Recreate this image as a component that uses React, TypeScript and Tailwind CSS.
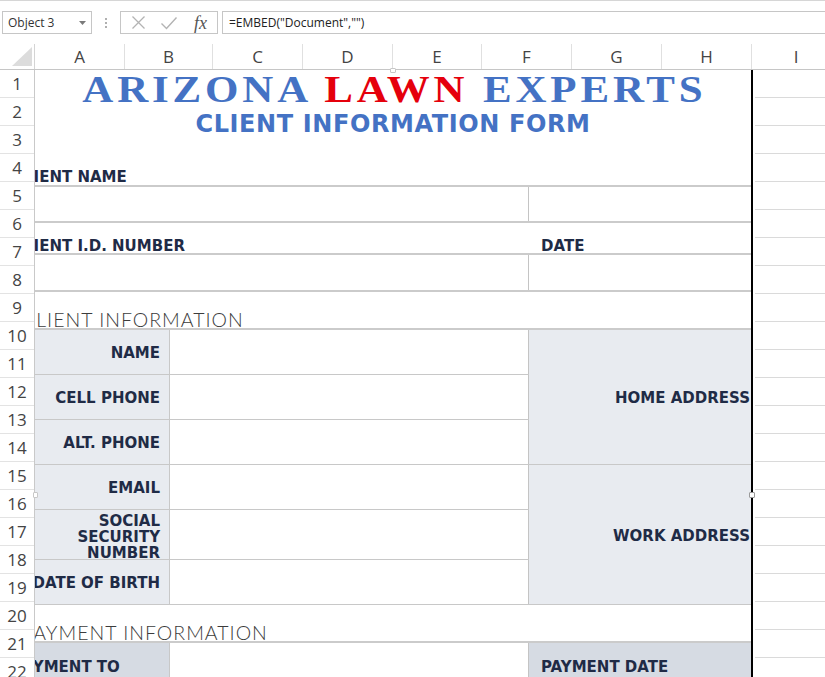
import React from "react";

const cols = [
  { l: "A", c: "w-[90px]" },
  { l: "B", c: "w-[88px]" },
  { l: "C", c: "w-[90px]" },
  { l: "D", c: "w-[90px]" },
  { l: "E", c: "w-[89px]" },
  { l: "F", c: "w-[90px]" },
  { l: "G", c: "w-[90px]" },
  { l: "H", c: "w-[90px]" },
  { l: "I", c: "w-[89px]" },
];

const infoRows = [
  { label: ["NAME"], h: "h-[45px]", p: "pt-[2px]" },
  { label: ["CELL PHONE"], h: "h-[45px]", p: "pt-[2px]" },
  { label: ["ALT. PHONE"], h: "h-[45px]", p: "pt-[2px]" },
  { label: ["EMAIL"], h: "h-[45px]", p: "pt-[2px]" },
  { label: ["SOCIAL", "SECURITY", "NUMBER"], h: "h-[50px]", p: "pt-[6px]" },
  { label: ["DATE OF BIRTH"], h: "h-[45px]", p: "pt-[2px]" },
];

const label = "font-['DejaVu_Sans',sans-serif] font-bold text-[15px] leading-none text-[#1f2b46] whitespace-nowrap";
const heading = "font-['Lato',sans-serif] font-light text-[19.5px] leading-none tracking-[1px] text-[#3c3c3c] whitespace-nowrap";
const line = "border-[#cbcbcb]";

export default function App() {
  const rows = Array.from({ length: 22 }, (_, i) => i + 1);
  return (
    <div className="w-[825px] h-[677px] overflow-hidden bg-white font-['Open_Sans',sans-serif] text-[#333]">
      {/* toolbar */}
      <div className="h-[44px] border-t border-[#d6d6d6] flex items-start pt-[10px] pl-[2px]">
        <div className="w-[90px] h-[23px] shrink-0 border border-[#c6c6c6] flex items-center justify-between pl-[5px] pr-[5px]">
          <span className="text-[12px] leading-none text-[#333]">Object 3</span>
          <svg width="7" height="4" viewBox="0 0 7 4">
            <path d="M0 0h7L3.5 4z" fill="#7a7a7a" />
          </svg>
        </div>
        <div className="w-[28px] h-[23px] shrink-0 flex flex-col items-center justify-center gap-[2px]">
          <span className="w-[2px] h-[2px] bg-[#b0b0b0]" />
          <span className="w-[2px] h-[2px] bg-[#b0b0b0]" />
          <span className="w-[2px] h-[2px] bg-[#b0b0b0]" />
        </div>
        <div className="w-[98px] h-[23px] shrink-0 border border-[#c6c6c6] flex items-center">
          <svg className="ml-[10px]" width="15" height="15" viewBox="0 0 15 15">
            <path d="M1.5 1.5l12 12M13.5 1.5l-12 12" stroke="#b3b3b3" strokeWidth="1.3" fill="none" />
          </svg>
          <svg className="ml-[14px]" width="18" height="14" viewBox="0 0 18 14">
            <path d="M1.5 7.5l5 5L16.5 1.5" stroke="#b3b3b3" strokeWidth="1.4" fill="none" />
          </svg>
          <span className="ml-[16px] font-['Liberation_Serif',serif] italic text-[18px] leading-none text-[#555]">fx</span>
        </div>
        <div className="ml-[4px] flex-1 h-[23px] border-y border-l border-[#c6c6c6] flex items-center pl-[6px] text-[12px] leading-none text-[#222] whitespace-nowrap">
          =EMBED("Document","")
        </div>
      </div>

      {/* column header */}
      <div className="h-[26px] flex border-b border-[#c6c6c6] overflow-hidden">
        <div className="w-[35px] shrink-0 border-r border-[#d4d4d4] flex items-end justify-end pr-[2px] pb-[3px]">
          <svg width="20" height="19" viewBox="0 0 20 19">
            <path d="M20 0V19H0z" fill="#dcdcdc" />
          </svg>
        </div>
        {cols.map((c) => (
          <div
            key={c.l}
            className={`${c.c} shrink-0 border-r border-[#e0e0e0] flex items-center justify-center text-[17px] leading-none text-[#444]`}
          >
            {c.l}
          </div>
        ))}
      </div>

      {/* body */}
      <div className="relative flex h-[607px]">
        {/* row headers */}
        <div className="w-[35px] shrink-0 border-r border-[#c9c9c9] flex flex-col">
          {rows.map((r) => (
            <div
              key={r}
              className="h-[28px] shrink-0 border-b border-[#e3e3e3] flex items-center justify-center text-[17px] leading-none text-[#444]"
            >
              {r}
            </div>
          ))}
        </div>

        {/* embedded document */}
        <div className="w-[718px] shrink-0 border-r-2 border-black overflow-hidden bg-white flex flex-col">
          <div className="h-[93px] shrink-0 flex flex-col items-center">
            <div className="scale-x-[1.13] font-['Liberation_Serif',serif] font-bold text-[38px] leading-none tracking-[3.4px] pl-[3px] text-[#4472c4] whitespace-nowrap">
              ARIZONA <span className="text-[#e5000c]">LAWN</span> EXPERTS
            </div>
            <div className="mt-[4px] font-['DejaVu_Sans',sans-serif] font-bold text-[24px] leading-none tracking-[0.6px] text-[#4472c4] whitespace-nowrap">
              CLIENT INFORMATION FORM
            </div>
          </div>

          <div className="ml-[-22px] w-[750px] shrink-0 flex flex-col">
            <div className="h-[22px] flex items-end">
              <span className={label}>CLIENT NAME</span>
            </div>
            <div className={`h-[38px] border-y-2 ${line} flex`}>
              <div className="w-[516px] border-r border-[#c4c4c4]" />
            </div>
            <div className="h-[30px] flex items-end">
              <div className="w-[516px] mb-[-4px]">
                <span className={label}>CLIENT I.D. NUMBER</span>
              </div>
              <div className="pl-[12px] mb-[-4px]">
                <span className={label}>DATE</span>
              </div>
            </div>
            <div className={`h-[39px] border-y-2 ${line} flex`}>
              <div className="w-[516px] border-r border-[#c4c4c4]" />
            </div>
            <div className={`h-[38px] border-b-2 ${line} flex items-end pl-[9px]`}>
              <span className={`${heading} mb-[-1px]`}>CLIENT INFORMATION</span>
            </div>

            <div className="flex">
              <div className="w-[516px] flex flex-col">
                {infoRows.map((r, i) => (
                  <div key={i} className={`${r.h} flex border-b border-[#c8c8c8]`}>
                    <div className={`w-[157px] bg-[#e8ebf0] border-r border-[#c8c8c8] flex flex-col items-end justify-center pr-[9px] gap-[1px] ${r.p}`}>
                      {r.label.map((t) => (
                        <span key={t} className={label}>
                          {t}
                        </span>
                      ))}
                    </div>
                    <div className="flex-1 border-r border-[#c4c4c4]" />
                  </div>
                ))}
              </div>
              <div className="w-[234px] flex flex-col bg-[#e8ebf0]">
                <div className="h-[135px] border-b border-[#c8c8c8] flex items-center justify-end pr-[13px] pt-[2px]">
                  <span className={label}>HOME ADDRESS</span>
                </div>
                <div className="h-[140px] border-b border-[#c8c8c8] flex items-center justify-end pr-[13px] pt-[4px]">
                  <span className={label}>WORK ADDRESS</span>
                </div>
              </div>
            </div>

            <div className={`h-[38px] border-b-2 ${line} flex items-end pl-[9px]`}>
              <span className={`${heading} mb-[-1px]`}>PAYMENT INFORMATION</span>
            </div>
            <div className="h-[45px] flex border-b border-[#c8c8c8]">
              <div className="w-[157px] bg-[#d6dbe3] border-r border-[#c8c8c8] flex items-center pt-[4px]">
                <span className={label}>PAYMENT TO</span>
              </div>
              <div className="w-[359px] border-r border-[#c4c4c4]" />
              <div className="w-[234px] bg-[#d6dbe3] flex items-center pl-[12px] pt-[4px]">
                <span className={label}>PAYMENT DATE</span>
              </div>
            </div>
          </div>
        </div>

        {/* sheet grid to the right */}
        <div className="flex-1 flex flex-col pl-[2px]">
          {rows.map((r) => (
            <div key={r} className="h-[28px] shrink-0 border-b border-[#dadada]" />
          ))}
        </div>

        {/* selection handles */}
        <span className="absolute left-[749px] top-[422px] w-[6px] h-[6px] rounded-[1px] bg-white border border-[#9a9a9a]" />
        <span className="absolute left-[33px] top-[422px] w-[5px] h-[6px] rounded-[1px] bg-white border border-[#c8c8c8]" />
        <span className="absolute left-[390px] top-[-2px] w-[6px] h-[5px] rounded-[1px] bg-white border border-[#c8c8c8]" />
      </div>
    </div>
  );
}
